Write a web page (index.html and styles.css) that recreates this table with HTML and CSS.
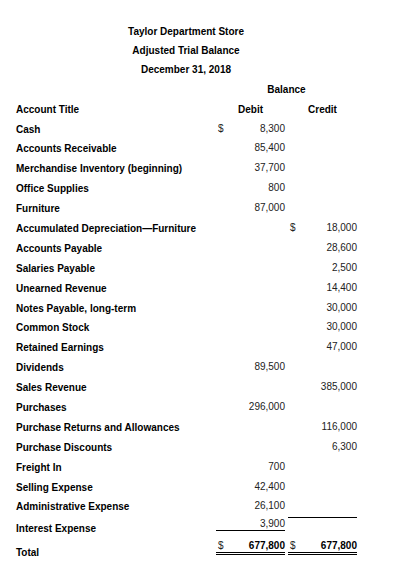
FILE: index.html
```html
<!DOCTYPE html>
<html lang="en">
<head>
<meta charset="utf-8">
<title>Adjusted Trial Balance</title>
<link rel="stylesheet" href="styles.css">
</head>
<body>
<div class="sheet">
  <header class="titles">
    <div>Taylor Department Store</div>
    <div>Adjusted Trial Balance</div>
    <div>December 31, 2018</div>
  </header>
  <div class="row head-top"><span class="balance">Balance</span></div>
  <div class="row head"><span class="label">Account Title</span><span class="col-head">Debit</span><span class="col-head credit">Credit</span></div>

  <div class="row"><span class="label">Cash</span><span class="amt"><span>$</span><span>8,300</span></span><span class="amt credit"></span></div>
  <div class="row"><span class="label">Accounts Receivable</span><span class="amt"><span></span><span>85,400</span></span><span class="amt credit"></span></div>
  <div class="row"><span class="label">Merchandise Inventory (beginning)</span><span class="amt"><span></span><span>37,700</span></span><span class="amt credit"></span></div>
  <div class="row"><span class="label">Office Supplies</span><span class="amt"><span></span><span>800</span></span><span class="amt credit"></span></div>
  <div class="row"><span class="label">Furniture</span><span class="amt"><span></span><span>87,000</span></span><span class="amt credit"></span></div>
  <div class="row"><span class="label">Accumulated Depreciation—Furniture</span><span class="amt"></span><span class="amt credit"><span>$</span><span>18,000</span></span></div>
  <div class="row"><span class="label">Accounts Payable</span><span class="amt"></span><span class="amt credit"><span></span><span>28,600</span></span></div>
  <div class="row"><span class="label">Salaries Payable</span><span class="amt"></span><span class="amt credit"><span></span><span>2,500</span></span></div>
  <div class="row"><span class="label">Unearned Revenue</span><span class="amt"></span><span class="amt credit"><span></span><span>14,400</span></span></div>
  <div class="row"><span class="label">Notes Payable, long-term</span><span class="amt"></span><span class="amt credit"><span></span><span>30,000</span></span></div>
  <div class="row"><span class="label">Common Stock</span><span class="amt"></span><span class="amt credit"><span></span><span>30,000</span></span></div>
  <div class="row"><span class="label">Retained Earnings</span><span class="amt"></span><span class="amt credit"><span></span><span>47,000</span></span></div>
  <div class="row"><span class="label">Dividends</span><span class="amt"><span></span><span>89,500</span></span><span class="amt credit"></span></div>
  <div class="row"><span class="label">Sales Revenue</span><span class="amt"></span><span class="amt credit"><span></span><span>385,000</span></span></div>
  <div class="row"><span class="label">Purchases</span><span class="amt"><span></span><span>296,000</span></span><span class="amt credit"></span></div>
  <div class="row"><span class="label">Purchase Returns and Allowances</span><span class="amt"></span><span class="amt credit"><span></span><span>116,000</span></span></div>
  <div class="row"><span class="label">Purchase Discounts</span><span class="amt"></span><span class="amt credit"><span></span><span>6,300</span></span></div>
  <div class="row"><span class="label">Freight In</span><span class="amt"><span></span><span>700</span></span><span class="amt credit"></span></div>
  <div class="row"><span class="label">Selling Expense</span><span class="amt"><span></span><span>42,400</span></span><span class="amt credit"></span></div>
  <div class="row"><span class="label">Administrative Expense</span><span class="amt"><span></span><span>26,100</span></span><span class="amt credit"></span></div>
  <div class="row last"><span class="label">Interest Expense</span><span class="amt"><span></span><span>3,900</span></span><span class="amt credit"></span></div>
  <div class="row total"><span class="label">Total</span><span class="amt"><span>$</span><span class="strong">677,800</span></span><span class="amt credit"><span>$</span><span class="strong">677,800</span></span></div>
</div>
</body>
</html>
```
FILE: styles.css
```css
html, body {
  margin: 0;
  padding: 0;
  background: #ffffff;
}

body {
  font-family: "Liberation Sans", Arial, sans-serif;
  font-size: 10px;
  color: #000;
}

.sheet {
  width: 340px;
  margin-left: 16px;
  padding-top: 22px;
}

.titles {
  text-align: center;
  font-weight: bold;
  line-height: 19px;
}

.row {
  display: grid;
  grid-template-columns: 200px 69px 72px;
  height: 19.9px;
  align-items: center;
  line-height: 20px;
}

.head-top {
  height: 20px;
  margin-top: 1px;
}

.head {
  height: 19.5px;
}

.balance {
  grid-column: 2 / 4;
  text-align: center;
  font-weight: bold;
}

.label {
  font-weight: bold;
  white-space: nowrap;
}

.col-head {
  text-align: center;
  font-weight: bold;
}

.credit {
  margin-left: 3px;
}

.amt {
  display: flex;
  justify-content: space-between;
  padding-left: 2px;
  padding-bottom: 2px;
  line-height: 14px;
  color: #222;
}

.row.last {
  height: 21.5px;
}

.row.last .label {
  align-self: end;
}

.row.last .amt {
  align-self: start;
  padding-bottom: 0;
  line-height: 13px;
  border-bottom: 1px solid #000;
}

.row.total {
  height: 24px;
}

.row.total .label {
  align-self: end;
}

.row.total .amt {
  align-self: start;
  padding-bottom: 0;
  line-height: 13px;
  border-bottom: 3px double #000;
}

.strong {
  font-weight: bold;
  color: #000;
}
```
